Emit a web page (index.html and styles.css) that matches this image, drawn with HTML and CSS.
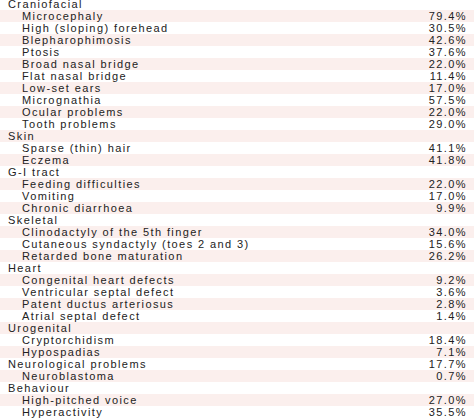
FILE: index.html
```html
<!DOCTYPE html>
<html>
<head>
<meta charset="utf-8">
<link rel="stylesheet" href="styles.css">
</head>
<body>
<div class="table">
  <div class="row cat"><span class="name">Craniofacial</span><span class="val"></span></div>
  <div class="row sub"><span class="name">Microcephaly</span><span class="val">79.4%</span></div>
  <div class="row sub"><span class="name">High (sloping) forehead</span><span class="val">30.5%</span></div>
  <div class="row sub"><span class="name">Blepharophimosis</span><span class="val">42.6%</span></div>
  <div class="row sub"><span class="name">Ptosis</span><span class="val">37.6%</span></div>
  <div class="row sub"><span class="name">Broad nasal bridge</span><span class="val">22.0%</span></div>
  <div class="row sub"><span class="name">Flat nasal bridge</span><span class="val">11.4%</span></div>
  <div class="row sub"><span class="name">Low-set ears</span><span class="val">17.0%</span></div>
  <div class="row sub"><span class="name">Micrognathia</span><span class="val">57.5%</span></div>
  <div class="row sub"><span class="name">Ocular problems</span><span class="val">22.0%</span></div>
  <div class="row sub"><span class="name">Tooth problems</span><span class="val">29.0%</span></div>
  <div class="row cat"><span class="name">Skin</span><span class="val"></span></div>
  <div class="row sub"><span class="name">Sparse (thin) hair</span><span class="val">41.1%</span></div>
  <div class="row sub"><span class="name">Eczema</span><span class="val">41.8%</span></div>
  <div class="row cat"><span class="name">G-I tract</span><span class="val"></span></div>
  <div class="row sub"><span class="name">Feeding difficulties</span><span class="val">22.0%</span></div>
  <div class="row sub"><span class="name">Vomiting</span><span class="val">17.0%</span></div>
  <div class="row sub"><span class="name">Chronic diarrhoea</span><span class="val">9.9%</span></div>
  <div class="row cat"><span class="name">Skeletal</span><span class="val"></span></div>
  <div class="row sub"><span class="name">Clinodactyly of the 5th finger</span><span class="val">34.0%</span></div>
  <div class="row sub"><span class="name">Cutaneous syndactyly (toes 2 and 3)</span><span class="val">15.6%</span></div>
  <div class="row sub"><span class="name">Retarded bone maturation</span><span class="val">26.2%</span></div>
  <div class="row cat"><span class="name">Heart</span><span class="val"></span></div>
  <div class="row sub"><span class="name">Congenital heart defects</span><span class="val">9.2%</span></div>
  <div class="row sub"><span class="name">Ventricular septal defect</span><span class="val">3.6%</span></div>
  <div class="row sub"><span class="name">Patent ductus arteriosus</span><span class="val">2.8%</span></div>
  <div class="row sub"><span class="name">Atrial septal defect</span><span class="val">1.4%</span></div>
  <div class="row cat"><span class="name">Urogenital</span><span class="val"></span></div>
  <div class="row sub"><span class="name">Cryptorchidism</span><span class="val">18.4%</span></div>
  <div class="row sub"><span class="name">Hypospadias</span><span class="val">7.1%</span></div>
  <div class="row cat"><span class="name">Neurological problems</span><span class="val">17.7%</span></div>
  <div class="row sub"><span class="name">Neuroblastoma</span><span class="val">0.7%</span></div>
  <div class="row cat"><span class="name">Behaviour</span><span class="val"></span></div>
  <div class="row sub"><span class="name">High-pitched voice</span><span class="val">27.0%</span></div>
  <div class="row sub"><span class="name">Hyperactivity</span><span class="val">35.5%</span></div>
</div>
</body>
</html>
```
FILE: styles.css
```css
html, body {
  margin: 0;
  padding: 0;
  background: #ffffff;
}
body {
  font-family: "Liberation Sans", Arial, sans-serif;
  font-size: 11px;
  color: #222222;
  letter-spacing: 1.4px;
}
.table {
  display: flex;
  flex-direction: column;
  margin-top: -2px;
}
.row {
  display: flex;
  justify-content: space-between;
  align-items: center;
  height: 12px;
  line-height: 12px;
  padding: 0 7px 0 8px;
  white-space: nowrap;
}
.row:nth-child(even) {
  background: #fbefed;
}
.sub .name {
  padding-left: 14px;
}
.val {
  text-align: right;
}
```
